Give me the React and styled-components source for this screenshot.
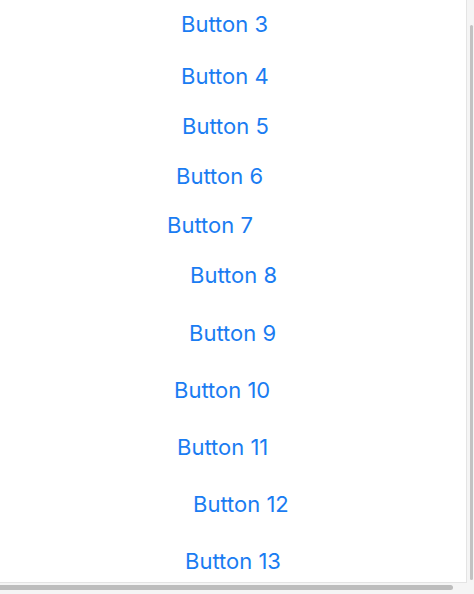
import styled, { createGlobalStyle } from "styled-components";

const buttons = [
  { label: "Button 3", indent: 181, gap: 11 },
  { label: "Button 4", indent: 181, gap: 26 },
  { label: "Button 5", indent: 182, gap: 24 },
  { label: "Button 6", indent: 176, gap: 24 },
  { label: "Button 7", indent: 167, gap: 23 },
  { label: "Button 8", indent: 190, gap: 24 },
  { label: "Button 9", indent: 189, gap: 32 },
  { label: "Button 10", indent: 174, gap: 31 },
  { label: "Button 11", indent: 177, gap: 31 },
  { label: "Button 12", indent: 193, gap: 31 },
  { label: "Button 13", indent: 185, gap: 31 },
];

function App() {
  return (
    <>
      <GlobalStyle />
      <Frame>
        <Viewport>
          <List>
            {buttons.map((item) => (
              <Row key={item.label} $indent={item.indent} $gap={item.gap}>
                <TextButton>{item.label}</TextButton>
              </Row>
            ))}
          </List>
        </Viewport>
        <VerticalRail>
          <VerticalThumb />
        </VerticalRail>
        <HorizontalRail>
          <HorizontalThumb />
        </HorizontalRail>
        <Corner />
      </Frame>
    </>
  );
}

const GlobalStyle = createGlobalStyle`
  html, body {
    margin: 0;
    padding: 0;
    background: #ffffff;
    overflow: hidden;
  }
`;

const Frame = styled.div`
  display: grid;
  grid-template-columns: 467px 7px;
  grid-template-rows: 583px 11px;
  width: 474px;
  height: 594px;
  background: #f7f7f7;
`;

const Viewport = styled.div`
  background: #ffffff;
  border-right: 1px solid #e4e4e4;
  border-bottom: 1px solid #e4e4e4;
  overflow: hidden;
`;

const List = styled.div`
  display: flex;
  flex-direction: column;
`;

const Row = styled.div`
  display: flex;
  padding-left: ${(p) => p.$indent}px;
  margin-top: ${(p) => p.$gap}px;
`;

const TextButton = styled.button`
  border: none;
  background: none;
  padding: 0;
  font-family: Inter, "Liberation Sans", sans-serif;
  font-size: 22px;
  line-height: 26px;
  color: #1a7cf2;
  cursor: pointer;
`;

const VerticalRail = styled.div`
  display: flex;
  padding: 25px 1px 3px 3px;
  background: #f5f5f5;
`;

const VerticalThumb = styled.div`
  flex: 1;
  background: #c2c2c2;
  border-radius: 2px;
`;

const HorizontalRail = styled.div`
  display: flex;
  padding: 2px 14px 4px 0;
  background: #f5f5f5;
`;

const HorizontalThumb = styled.div`
  flex: 1;
  background: #bdbdbd;
  border-radius: 0 3px 3px 0;
`;

const Corner = styled.div`
  background: #f5f5f5;
`;

export default App;
